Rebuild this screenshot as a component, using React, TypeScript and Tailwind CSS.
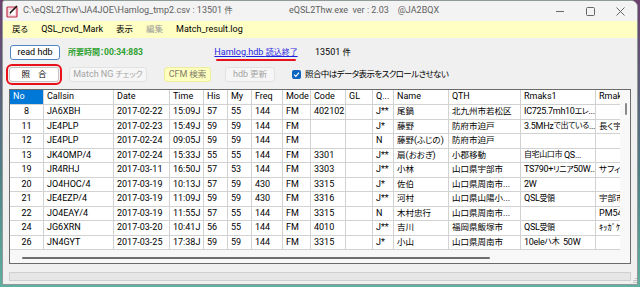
import type { ReactNode } from 'react';

const CJK = /([\u3000-\u30ff\u3400-\u9fff\uff00-\uffef]+)/;

// Meiryo UI draws kana/kanji smaller than latin text, so shrink the CJK runs
function J({ t, c = 'text-[8.5px]' }: { t: string; c?: string }) {
  const parts = t.split(CJK);
  return <>{parts.map((p, i) => (i % 2 ? <span key={i} className={c}>{p}</span> : p))}</>;
}

const cols = [
  { k: 'No', w: 'w-[34px]' },
  { k: 'Callsin', w: 'w-[70px]' },
  { k: 'Date', w: 'w-[56px]' },
  { k: 'Time', w: 'w-[34px]' },
  { k: 'His', w: 'w-[24px]' },
  { k: 'My', w: 'w-[24px]' },
  { k: 'Freq', w: 'w-[31px]' },
  { k: 'Mode', w: 'w-[28px]' },
  { k: 'Code', w: 'w-[35px]' },
  { k: 'GL', w: 'w-[27px]' },
  { k: 'Q...', w: 'w-[21px]' },
  { k: 'Name', w: 'w-[55px]' },
  { k: 'QTH', w: 'w-[72px]' },
  { k: 'Rmaks1', w: 'w-[75px] tracking-[-0.3px]' },
  { k: 'Rmaks2', w: 'w-[70px]' },
];

const rows: string[][] = [
  ['8', 'JA6XBH', '2017-02-22', '15:09J', '57', '55', '144', 'FM', '402102', '', 'J**', '尾鍋', '北九州市若松区', 'IC725.7mh10エレ...', ''],
  ['11', 'JE4PLP', '2017-02-23', '15:49J', '59', '59', '144', 'FM', '', '', 'J*', '藤野', '防府市迫戸', '3.5MHzで出ている...', '長く宇部'],
  ['12', 'JE4PLP', '2017-02-24', '09:05J', '59', '59', '144', 'FM', '', '', 'N', '藤野(ふじの)', '防府市迫戸', '', ''],
  ['13', 'JK4OMP/4', '2017-02-24', '15:33J', '55', '55', '144', 'FM', '3301', '', 'J**', '扇(おおぎ)', '小郡移動', '自宅  山口市 QS...', ''],
  ['19', 'JR4RHJ', '2017-03-11', '16:50J', '57', '53', '144', 'FM', '3303', '', 'J**', '小林', '山口県宇部市', 'TS790+リニア50W...', 'サフィックス'],
  ['20', 'JO4HOC/4', '2017-03-19', '10:13J', '57', '59', '430', 'FM', '3315', '', 'J*', '佐伯', '山口県周南市...', '2W', ''],
  ['21', 'JE4EZP/4', '2017-03-19', '11:09J', '59', '59', '430', 'FM', '3316', '', 'J**', '河村', '山口県山陽小...', 'QSL受領', '宇部市'],
  ['22', 'JO4EAY/4', '2017-03-19', '11:55J', '57', '55', '144', 'FM', '3315', '', 'N', '木村忠行', '山口県周南市...', '', 'PM54'],
  ['24', 'JG6XRN', '2017-03-20', '10:41J', '56', '55', '144', 'FM', '4010', '', 'J**', '吉川', '福岡県飯塚市', 'QSL受領', 'ｷｯｶﾞｹ'],
  ['26', 'JN4GYT', '2017-03-25', '17:38J', '59', '59', '144', 'FM', '3315', '', 'J*', '小山', '山口県周南市', '10eleハ木  50W', ''],
];

function AppIcon() {
  return (
    <svg width="13" height="13" viewBox="0 0 13 13" className="shrink-0">
      <rect x="1" y="2" width="10" height="10" rx="1" fill="#f7d4dc" stroke="#c0304a" strokeWidth="1.2" />
      <rect x="3" y="5" width="6" height="5" fill="#fff" />
      <path d="M4 8 L11 1" stroke="#111" strokeWidth="1.6" />
      <path d="M4 8 L3.5 9.5 L5 9" fill="#111" />
    </svg>
  );
}

function Btn({ children, cls }: { children: ReactNode; cls: string }) {
  return (
    <div className={`flex h-[15px] shrink-0 items-center justify-center rounded-[3px] border text-[9px] leading-none ${cls}`}>
      {children}
    </div>
  );
}

export default function App() {
  return (
    <div className="flex h-[287px] w-[640px] overflow-hidden bg-[linear-gradient(180deg,#6d3f6f_0%,#4f7f86_60%,#5fb0a0_100%)] [font-family:Roboto,'Noto_Sans_CJK_JP',sans-serif] [font-feature-settings:'palt']">
      <div className="ml-[2px] flex h-[285px] w-[636px] flex-col overflow-hidden rounded-tl-[3px] rounded-tr-[7px] border border-[#8f9a98] bg-[#f0f0f0]">
        {/* title bar */}
        <div className="flex h-[20px] shrink-0 items-center bg-[#f3f3f3] pl-[3px] text-[9px] text-[#5f5f5f]">
          <AppIcon />
          <span className="ml-[4px] w-[266px] shrink-0 whitespace-nowrap">
            <J t="C:\eQSL2Thw\JA4JOE\Hamlog_tmp2.csv  :  13501 件" />
          </span>
          <span className="whitespace-nowrap">eQSL2Thw.exe&nbsp;&nbsp;ver : 2.03&nbsp;&nbsp;&nbsp;&nbsp;@JA2BQX</span>
          <div className="ml-auto flex items-center">
            <svg width="30" height="20" viewBox="0 0 30 20"><path d="M11 10.5 H19" stroke="#666" strokeWidth="1" /></svg>
            <svg width="30" height="20" viewBox="0 0 30 20"><rect x="11.5" y="6.5" width="8" height="8" rx="1" fill="none" stroke="#666" /></svg>
            <svg width="32" height="20" viewBox="0 0 32 20"><path d="M11.5 6.5 L19.5 14.5 M19.5 6.5 L11.5 14.5" stroke="#666" strokeWidth="1" /></svg>
          </div>
        </div>

        {/* menu bar */}
        <div className="flex h-[17px] shrink-0 items-center bg-[#ffffc4] pl-[9px] text-[9px] text-black">
          <span><J t="戻る" /></span>
          <span className="ml-[13px]">QSL_rcvd_Mark</span>
          <span className="ml-[13px]"><J t="表示" /></span>
          <span className="ml-[13px] text-[#9a9a9a]"><J t="編集" /></span>
          <span className="ml-[13px]">Match_result.log</span>
        </div>

        {/* body */}
        <div className="flex flex-1 flex-col pl-[3px] pt-[7px]">
          <div className="flex h-[15px] items-center">
            <Btn cls="ml-[4px] w-[50px] border-[#4f86c6] bg-white text-black">read hdb</Btn>
            <span className="ml-[8px] w-[72px] shrink-0 whitespace-nowrap text-[8.5px] font-bold text-[#2ca02c]">
              <J t="所要時間：" c="text-[8px]" />00:34:883
            </span>
            <div className="ml-[76px] flex w-[80px] shrink-0 flex-col items-center pt-[3px]">
              <span className="whitespace-nowrap text-[9px] leading-[11px] text-[#1f1fe0] underline">
                Hamlog.hdb <J t="読込終了" c="text-[8px]" />
              </span>
              <div className="mt-[1px] h-[2px] w-[80px] rounded-full bg-[#e8101a]" />
            </div>
            <span className="ml-[19px] whitespace-nowrap text-[9px] text-black">
              13501 <J t="件" />
            </span>
          </div>

          <div className="mt-[4px] flex h-[21px] items-center">
            <div className="flex h-[21px] w-[56px] shrink-0 items-center justify-center rounded-[6px] border-2 border-[#e8101a]">
              <Btn cls="w-[50px] border-[#c4c4c4] bg-white text-black">
                <span className="pl-[8px] text-[8.5px] tracking-[8px]">照合</span>
              </Btn>
            </div>
            <Btn cls="ml-[7px] w-[78px] border-[#e2e2e2] bg-[#f6f6f6] text-[#a3a3a3]">
              Match NG <J t="チェック" c="ml-[2px] text-[8px]" />
            </Btn>
            <Btn cls="ml-[17px] w-[47px] border-[#ecec9a] bg-[#ffffbf] text-[#7d7d6a]">
              CFM <J t="検索" c="ml-[2px] text-[8.5px]" />
            </Btn>
            <Btn cls="ml-[14px] w-[50px] border-[#e2e2e2] bg-[#f6f6f6] text-[#a3a3a3]">
              hdb <J t="更新" c="ml-[2px] text-[8.5px]" />
            </Btn>
            <div className="ml-[17px] flex h-[9px] w-[9px] shrink-0 items-center justify-center rounded-[2px] bg-[#0a64c0]">
              <svg width="7" height="7" viewBox="0 0 7 7"><path d="M1 3.6 L2.8 5.3 L6 1.6" fill="none" stroke="#fff" strokeWidth="1.2" /></svg>
            </div>
            <span className="ml-[4px] whitespace-nowrap text-[8.5px] tracking-[-0.6px] text-black">
              照合中はデータ表示をスクロールさせない
            </span>
          </div>

          {/* grid */}
          <div className="ml-[3px] mt-[4px] flex h-[175px] w-[622px] border border-[#6b6b6b] bg-[#f8f8f8]">
            <div className="flex w-[610px] flex-col overflow-hidden">
              <div className="flex h-[15px] shrink-0 bg-white">
                {cols.map((c, i) => (
                  <div
                    key={c.k}
                    className={`${c.w} flex shrink-0 items-center overflow-hidden whitespace-nowrap border-b border-r border-[#d2d2d2] pl-[3px] text-[9px] tracking-normal ${i === 0 ? 'bg-[#0078d7] text-white' : 'text-black'}`}
                  >
                    {c.k}
                  </div>
                ))}
              </div>
              {rows.map((r) => (
                <div key={r[0]} className="flex h-[14.5px] shrink-0 bg-white">
                  {r.map((v, i) => (
                    <div
                      key={i}
                      className={`${cols[i].w} flex shrink-0 items-center overflow-hidden whitespace-pre border-b border-r border-[#d2d2d2] text-[9px] text-black ${i === 0 ? 'justify-center' : 'pl-[3px]'}`}
                    >
                      <J t={v} c={i === 13 ? 'text-[8px] tracking-[-0.4px]' : 'text-[8.5px]'} />
                    </div>
                  ))}
                </div>
              ))}
              <div className="flex flex-1 items-center pl-[12px] pt-[3px]">
                <div className="h-[1.5px] w-[468px] rounded-full bg-[#6e6e6e]" />
              </div>
            </div>
            <div className="flex w-[10px] flex-col items-center pt-[13px]">
              <div className="ml-[1px] h-[12px] w-[2px] rounded-full bg-[#8a8a8a]" />
            </div>
          </div>

          {/* status bar */}
          <div className="ml-[3px] mt-[8px] flex items-end">
            <div className="h-[9px] w-[622px] border border-[#cfcfcf] bg-[#e6e6e6]" />
            <svg width="5" height="5" viewBox="0 0 5 5" className="mb-[-2px] ml-[1px]">
              <rect x="3.5" y="0" width="1" height="1" fill="#999" />
              <rect x="3.5" y="2" width="1" height="1" fill="#999" />
              <rect x="1.5" y="2" width="1" height="1" fill="#999" />
              <rect x="3.5" y="4" width="1" height="1" fill="#999" />
              <rect x="1.5" y="4" width="1" height="1" fill="#999" />
            </svg>
          </div>
        </div>
      </div>
    </div>
  );
}
